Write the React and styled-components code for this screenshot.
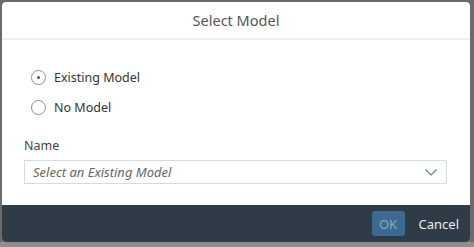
import React, { useState } from "react";
import styled, { createGlobalStyle } from "styled-components";

const Global = createGlobalStyle`
  html, body {
    margin: 0;
    padding: 0;
    background: #6b6b6b;
    font-family: "Noto Sans", "Liberation Sans", sans-serif;
  }
`;

const Backdrop = styled.div`
  width: 474px;
  height: 247px;
  padding: 2px 4px 0 2px;
  box-sizing: border-box;
  background: linear-gradient(#6b6b6b 0, #6b6b6b 242px, #8e8e8e 242px);
`;

const Dialog = styled.div`
  width: 468px;
  height: 240px;
  background: #fff;
  border-radius: 4px;
  display: flex;
  flex-direction: column;
  overflow: hidden;
`;

const Header = styled.div`
  height: 36px;
  flex-shrink: 0;
  display: flex;
  align-items: center;
  justify-content: center;
  border-bottom: 2px solid #eef0f1;
  font-size: 14.5px;
  color: #555;
`;

const Body = styled.div`
  flex: 1;
  padding: 22px 23px 0 22px;
  display: flex;
  flex-direction: column;
`;

const RadioRow = styled.label`
  display: flex;
  align-items: center;
  gap: 8px;
  height: 30px;
  padding-left: 7px;
  font-size: 12.5px;
  color: #333;
  cursor: pointer;
`;

const RadioCircle = styled.span`
  width: 13px;
  height: 13px;
  border-radius: 50%;
  border: 1px solid #8a8e92;
  display: flex;
  align-items: center;
  justify-content: center;
  &::after {
    content: "";
    width: 3px;
    height: 3px;
    border-radius: 50%;
    background: ${(p) => (p.checked ? "#3f5a73" : "transparent")};
  }
`;

const Label = styled.div`
  margin-top: 15px;
  font-size: 12.5px;
  color: #444;
`;

const Select = styled.div`
  margin-top: 6px;
  height: 22px;
  border: 1px solid #d5dadd;
  display: flex;
  align-items: center;
  justify-content: space-between;
  padding: 0 9px 0 8px;
  font-size: 13px;
  font-style: italic;
  color: #666;
`;

const Footer = styled.div`
  height: 37px;
  flex-shrink: 0;
  margin-top: auto;
  background: #2f3c48;
  display: flex;
  align-items: center;
  justify-content: flex-end;
  gap: 14px;
  padding-right: 11px;
`;

const OkButton = styled.button`
  width: 33px;
  height: 25px;
  border: none;
  border-radius: 3px;
  background: #3d6a90;
  color: #8ea6bb;
  font-family: inherit;
  font-size: 13px;
  padding: 0;
`;

const TextButton = styled.button`
  border: none;
  background: none;
  color: #e8edf1;
  font-family: inherit;
  font-size: 13px;
  padding: 0;
`;

export default function App() {
  const [choice, setChoice] = useState("existing");
  return (
    <>
      <Global />
      <Backdrop>
        <Dialog>
          <Header>Select Model</Header>
          <Body>
            <RadioRow onClick={() => setChoice("existing")}>
              <RadioCircle checked={choice === "existing"} />
              Existing Model
            </RadioRow>
            <RadioRow onClick={() => setChoice("none")}>
              <RadioCircle checked={choice === "none"} />
              No Model
            </RadioRow>
            <Label>Name</Label>
            <Select>
              Select an Existing Model
              <svg width="12" height="7" viewBox="0 0 12 7">
                <path d="M0.5 0.5 L6 6 L11.5 0.5" fill="none" stroke="#5d7d9a" strokeWidth="1.2" />
              </svg>
            </Select>
          </Body>
          <Footer>
            <OkButton>OK</OkButton>
            <TextButton>Cancel</TextButton>
          </Footer>
        </Dialog>
      </Backdrop>
    </>
  );
}
